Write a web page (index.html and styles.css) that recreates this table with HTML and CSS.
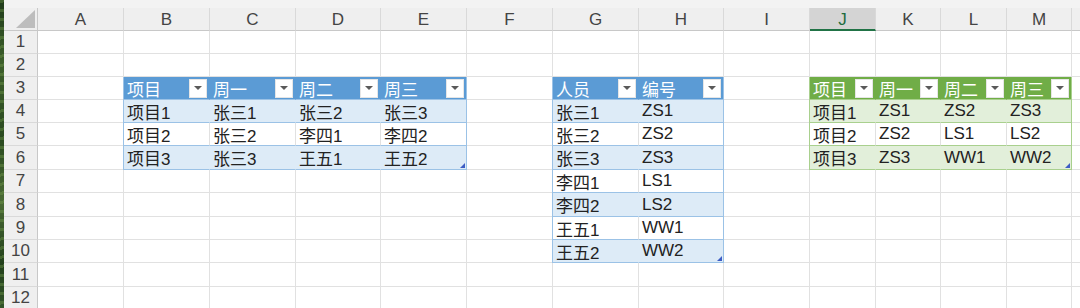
FILE: index.html
```html
<!DOCTYPE html>
<html lang="zh-CN">
<head>
<meta charset="utf-8">
<title>Sheet</title>
<link rel="stylesheet" href="styles.css">
</head>
<body>
<div class="sheet">
  <div class="stripe"></div>
  <div class="topstrip"></div>

  <div class="cn"><svg width="20" height="19" viewBox="0 0 20 19"><polygon points="19,0 19,18 0,18" fill="#bdbdbd"/></svg></div>
  <div class="ch">A</div><div class="ch">B</div><div class="ch">C</div><div class="ch">D</div><div class="ch">E</div><div class="ch">F</div><div class="ch">G</div><div class="ch">H</div><div class="ch">I</div><div class="ch sel">J</div><div class="ch">K</div><div class="ch">L</div><div class="ch">M</div><div class="ch"></div>

  <div class="rh">1</div><div class="c"></div><div class="c"></div><div class="c"></div><div class="c"></div><div class="c"></div><div class="c"></div><div class="c"></div><div class="c"></div><div class="c"></div><div class="c"></div><div class="c"></div><div class="c"></div><div class="c"></div><div class="c"></div>

  <div class="rh">2</div><div class="c"></div><div class="c"></div><div class="c"></div><div class="c"></div><div class="c"></div><div class="c"></div><div class="c"></div><div class="c"></div><div class="c"></div><div class="c"></div><div class="c"></div><div class="c"></div><div class="c"></div><div class="c"></div>

  <div class="rh">3</div><div class="c"></div>
  <div class="c bh tl"><span>项目</span><b class="dd"></b></div><div class="c bh"><span>周一</span><b class="dd"></b></div><div class="c bh"><span>周二</span><b class="dd"></b></div><div class="c bh tr"><span>周三</span><b class="dd"></b></div>
  <div class="c"></div>
  <div class="c bh tl"><span>人员</span><b class="dd"></b></div><div class="c bh tr"><span>编号</span><b class="dd"></b></div>
  <div class="c"></div>
  <div class="c gh tl"><span>项目</span><b class="dd"></b></div><div class="c gh"><span>周一</span><b class="dd"></b></div><div class="c gh"><span>周二</span><b class="dd"></b></div><div class="c gh tr"><span>周三</span><b class="dd"></b></div>
  <div class="c"></div>

  <div class="rh">4</div><div class="c"></div>
  <div class="c bb tl">项目1</div><div class="c bb">张三1</div><div class="c bb">张三2</div><div class="c bb tr">张三3</div>
  <div class="c"></div>
  <div class="c bb tl">张三1</div><div class="c bb tr">ZS1</div>
  <div class="c"></div>
  <div class="c gb tl">项目1</div><div class="c gb">ZS1</div><div class="c gb">ZS2</div><div class="c gb tr">ZS3</div>
  <div class="c"></div>

  <div class="rh">5</div><div class="c"></div>
  <div class="c bw tl">项目2</div><div class="c bw">张三2</div><div class="c bw">李四1</div><div class="c bw tr">李四2</div>
  <div class="c"></div>
  <div class="c bw tl">张三2</div><div class="c bw tr">ZS2</div>
  <div class="c"></div>
  <div class="c gw tl">项目2</div><div class="c gw">ZS2</div><div class="c gw">LS1</div><div class="c gw tr">LS2</div>
  <div class="c"></div>

  <div class="rh">6</div><div class="c"></div>
  <div class="c bb tl">项目3</div><div class="c bb">张三3</div><div class="c bb">王五1</div><div class="c bb tr end">王五2</div>
  <div class="c"></div>
  <div class="c bb tl">张三3</div><div class="c bb tr">ZS3</div>
  <div class="c"></div>
  <div class="c gb tl">项目3</div><div class="c gb">ZS3</div><div class="c gb">WW1</div><div class="c gb tr end">WW2</div>
  <div class="c"></div>

  <div class="rh">7</div><div class="c"></div><div class="c"></div><div class="c"></div><div class="c"></div><div class="c"></div><div class="c"></div>
  <div class="c bw tl">李四1</div><div class="c bw tr">LS1</div>
  <div class="c"></div><div class="c"></div><div class="c"></div><div class="c"></div><div class="c"></div><div class="c"></div>

  <div class="rh">8</div><div class="c"></div><div class="c"></div><div class="c"></div><div class="c"></div><div class="c"></div><div class="c"></div>
  <div class="c bb tl">李四2</div><div class="c bb tr">LS2</div>
  <div class="c"></div><div class="c"></div><div class="c"></div><div class="c"></div><div class="c"></div><div class="c"></div>

  <div class="rh">9</div><div class="c"></div><div class="c"></div><div class="c"></div><div class="c"></div><div class="c"></div><div class="c"></div>
  <div class="c bw tl">王五1</div><div class="c bw tr">WW1</div>
  <div class="c"></div><div class="c"></div><div class="c"></div><div class="c"></div><div class="c"></div><div class="c"></div>

  <div class="rh">10</div><div class="c"></div><div class="c"></div><div class="c"></div><div class="c"></div><div class="c"></div><div class="c"></div>
  <div class="c bb tl">王五2</div><div class="c bb tr end">WW2</div>
  <div class="c"></div><div class="c"></div><div class="c"></div><div class="c"></div><div class="c"></div><div class="c"></div>

  <div class="rh">11</div><div class="c"></div><div class="c"></div><div class="c"></div><div class="c"></div><div class="c"></div><div class="c"></div><div class="c"></div><div class="c"></div><div class="c"></div><div class="c"></div><div class="c"></div><div class="c"></div><div class="c"></div><div class="c"></div>

  <div class="rh">12</div><div class="c"></div><div class="c"></div><div class="c"></div><div class="c"></div><div class="c"></div><div class="c"></div><div class="c"></div><div class="c"></div><div class="c"></div><div class="c"></div><div class="c"></div><div class="c"></div><div class="c"></div><div class="c"></div>
</div>
</body>
</html>
```

FILE: styles.css
```css
html, body {
  margin: 0;
  padding: 0;
  background: #ffffff;
  overflow: hidden;
}

.sheet {
  display: grid;
  grid-template-columns: 4px 34px 86px 86px 86px 85px 86px 86px 86px 85px 86px 66px 65px 66px 65px 80px;
  grid-template-rows: 8px 23px 23px 23px 23px 23px 23px 24px 23px 24px 23px 23px 24px 23px;
  width: 1152px;
  font-family: "Liberation Sans", "Noto Sans CJK SC", sans-serif;
  font-size: 17px;
  color: #222222;
}

.sheet > div {
  box-sizing: border-box;
  min-width: 0;
}

.stripe {
  grid-column: 1;
  grid-row: 1 / -1;
  background:
    repeating-linear-gradient(170deg, rgba(120, 160, 80, 0.35) 0 3px, rgba(0, 0, 0, 0) 3px 9px),
    linear-gradient(180deg, #1f3b1a 0%, #3d5f2c 20%, #2a4a20 45%, #4a6b35 65%, #22401c 85%, #33552a 100%);
}

.topstrip {
  grid-column: 2 / -1;
  grid-row: 1;
  background: #f3f3f3;
}

.cn {
  background: #efefef;
  border-right: 1px solid #c8c8c8;
  border-bottom: 1px solid #c8c8c8;
  display: flex;
  align-items: flex-start;
  justify-content: flex-end;
  padding: 2px 1px 0 0;
}

.ch {
  background: #efefef;
  border-right: 1px solid #d9d9d9;
  border-bottom: 1px solid #c8c8c8;
  color: #444444;
  display: flex;
  align-items: center;
  justify-content: center;
  font-size: 17px;
  padding-top: 2px;
}

.ch.sel {
  background: #d4d4d4;
  color: #1e6b3f;
  border-bottom: 2px solid #217346;
  padding-top: 3px;
}

.rh {
  background: #efefef;
  border-right: 1px solid #c8c8c8;
  border-bottom: 1px solid #d9d9d9;
  color: #444444;
  display: flex;
  align-items: center;
  justify-content: center;
  font-size: 17px;
}

.c {
  border-right: 1px solid #e1e1e1;
  border-bottom: 1px solid #e1e1e1;
  display: flex;
  align-items: center;
  padding-left: 3px;
  white-space: nowrap;
  position: relative;
}

/* blue table */
.bh {
  background: #5b9bd5;
  color: #ffffff;
  border-right-color: #5b9bd5;
  border-bottom-color: #9bc2e6;
  justify-content: space-between;
  padding-right: 2px;
}
.bb {
  background: #ddebf7;
  border-right-color: #ddebf7;
  border-bottom-color: #9bc2e6;
}
.bw {
  border-bottom-color: #9bc2e6;
}
.bh.tl, .bb.tl, .bw.tl {
  box-shadow: -1px 0 0 #9bc2e6;
}
.bh.tr, .bb.tr, .bw.tr {
  border-right-color: #9bc2e6;
}

/* green table */
.gh {
  background: #70ad47;
  color: #ffffff;
  border-right-color: #70ad47;
  border-bottom-color: #a9d08e;
  justify-content: space-between;
  padding-right: 2px;
}
.gb {
  background: #e2efda;
  border-right-color: #e2efda;
  border-bottom-color: #a9d08e;
}
.gw {
  border-bottom-color: #a9d08e;
}
.gh.tl, .gb.tl, .gw.tl {
  box-shadow: -1px 0 0 #a9d08e;
}
.gh.tr, .gb.tr, .gw.tr {
  border-right-color: #a9d08e;
}

.dd {
  width: 18px;
  height: 19px;
  background: #ffffff;
  box-sizing: border-box;
  border: 1px solid #e6e6e6;
  display: flex;
  align-items: center;
  justify-content: center;
  flex: none;
}
.dd::before {
  content: "";
  width: 0;
  height: 0;
  border-left: 4px solid transparent;
  border-right: 4px solid transparent;
  border-top: 4px solid #5a5a5a;
}

.end::after {
  content: "";
  position: absolute;
  right: 1px;
  bottom: 1px;
  width: 0;
  height: 0;
  border-left: 5px solid transparent;
  border-bottom: 5px solid #3d5dc4;
}
```
